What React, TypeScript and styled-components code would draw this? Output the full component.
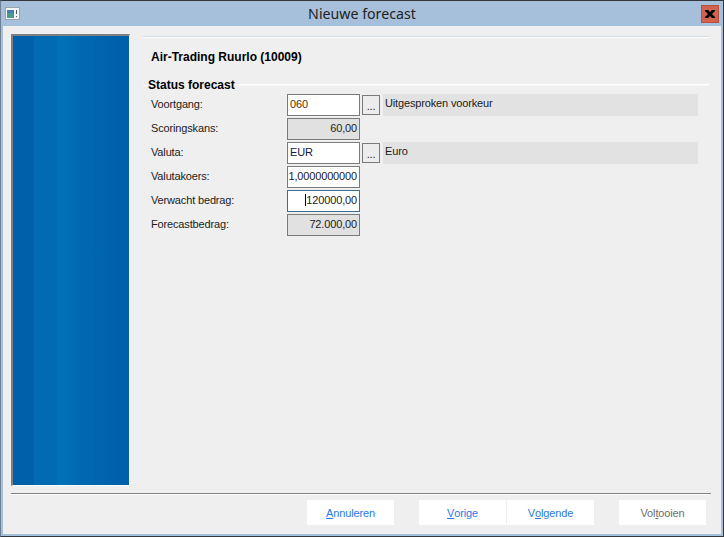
import { createGlobalStyle } from "styled-components";
import styled from "styled-components";

const GlobalStyle = createGlobalStyle`
  html, body {
    margin: 0;
    padding: 0;
    background: #a6c0dc;
  }
  * {
    box-sizing: border-box;
  }
`;

interface FormRow {
  label: string;
  value: string;
  align?: "left" | "right";
  readOnly?: boolean;
  focused?: boolean;
  tone?: string;
  lookup?: string;
}

const rows: FormRow[] = [
  { label: "Voortgang:", value: "060", tone: "#5a3000", lookup: "Uitgesproken voorkeur" },
  { label: "Scoringskans:", value: "60,00", align: "right", readOnly: true },
  { label: "Valuta:", value: "EUR", tone: "#10203a", lookup: "Euro" },
  { label: "Valutakoers:", value: "1,0000000000", align: "right" },
  { label: "Verwacht bedrag:", value: "120000,00", align: "right", focused: true },
  { label: "Forecastbedrag:", value: "72.000,00", align: "right", readOnly: true },
];

export default function App() {
  return (
    <>
      <GlobalStyle />
      <Window>
        <TitleBar>
          <SystemIcon viewBox="0 0 15 13" width="15" height="13">
            <rect x="0.5" y="0.5" width="14" height="12" fill="#f4f4f4" stroke="#9aa3ab" />
            <rect x="2" y="3" width="7" height="8" fill="#4c9a8e" />
            <rect x="2" y="3" width="7" height="3" fill="#4a7fa8" />
            <rect x="11" y="3" width="1" height="4" fill="#4a5866" />
            <rect x="11" y="9" width="1" height="1" fill="#4a5866" />
          </SystemIcon>
          <Title>Nieuwe forecast</Title>
          <CloseButton>
            <svg viewBox="0 0 10 8" width="10" height="8">
              <path d="M0 0h3l2 2 2-2h3v1L7 4l3 3v1H7L5 6 3 8H0V7l3-3-3-3z" fill="#000" />
            </svg>
          </CloseButton>
        </TitleBar>
        <Client>
          <Main>
            <SidePanel />
            <Content>
              <TopRule />
              <Customer>Air-Trading Ruurlo (10009)</Customer>
              <GroupHeader>
                <GroupTick />
                <GroupTitle>Status forecast</GroupTitle>
                <GroupLine />
              </GroupHeader>
              <Form>
                {rows.map((row) => (
                  <Row key={row.label}>
                    <Label>{row.label}</Label>
                    <Field $align={row.align} $readOnly={row.readOnly} $focused={row.focused} $tone={row.tone}>
                      {row.focused ? <Caret /> : null}
                      {row.value}
                    </Field>
                    {row.lookup ? (
                      <>
                        <LookupButton>...</LookupButton>
                        <LookupText>{row.lookup}</LookupText>
                      </>
                    ) : null}
                  </Row>
                ))}
              </Form>
            </Content>
          </Main>
          <BottomRule />
          <Footer>
            <WizardButton>
              <u>A</u>nnuleren
            </WizardButton>
            <StepGroup>
              <WizardButton>
                <u>V</u>orige
              </WizardButton>
              <WizardButton>
                V<u>o</u>lgende
              </WizardButton>
            </StepGroup>
            <WizardButton $disabled>
              Vol<u>t</u>ooien
            </WizardButton>
          </Footer>
        </Client>
      </Window>
    </>
  );
}

const Window = styled.div`
  width: 724px;
  height: 537px;
  display: flex;
  flex-direction: column;
  padding: 0 2px 2px;
  background: #a6c0dc;
  border: 1px solid #3c4044;
  border-color: #34373b #34373b #34373b #6d7f92;
  font-family: "Liberation Sans", Arial, sans-serif;
  font-size: 11px;
  letter-spacing: -0.15px;
  color: #111;
`;

const TitleBar = styled.div`
  position: relative;
  flex: none;
  height: 25px;
  display: flex;
  align-items: center;
  justify-content: center;
`;

const SystemIcon = styled.svg`
  position: absolute;
  left: 2px;
  top: 6px;
`;

const Title = styled.div`
  font-family: "Noto Sans", "Open Sans", sans-serif;
  font-size: 14.2px;
  letter-spacing: 0;
  color: #222;
`;

const CloseButton = styled.div`
  position: absolute;
  right: 2px;
  top: 4px;
  width: 18px;
  height: 18px;
  display: flex;
  align-items: center;
  justify-content: center;
  background: #cf6350;
  border: 1px solid #b9503f;
`;

const Client = styled.div`
  flex: 1;
  display: flex;
  flex-direction: column;
  padding: 8px 10px 8px 8px;
  background: #efefef;
`;

const Main = styled.div`
  flex: none;
  height: 452px;
  display: flex;
`;

const SidePanel = styled.div`
  flex: none;
  width: 119px;
  border-style: solid;
  border-width: 2px 1px 1px 2px;
  border-color: #7f7f7f #fafafa #fafafa #7f7f7f;
  background: linear-gradient(
    90deg,
    #0060a9 0 21px,
    #006ab2 21px 44px,
    #0071b6 44px 52px,
    #0068b2 68px,
    #005ea9 100%
  );
`;

const Content = styled.div`
  flex: 1;
  min-width: 0;
  padding: 2px 2px 0 13px;
  display: flex;
  flex-direction: column;
`;

const TopRule = styled.div`
  height: 2px;
  border-top: 1px solid #d3dde6;
  background: #fff;
`;

const Customer = styled.div`
  margin: 11px 0 0 8px;
  height: 16px;
  line-height: 16px;
  font-size: 12px;
  letter-spacing: 0;
  font-weight: bold;
  color: #000;
`;

const GroupHeader = styled.div`
  margin-top: 12px;
  height: 16px;
  display: flex;
  align-items: center;
`;

const GroupTick = styled.div`
  width: 4px;
  height: 1px;
  background: #fff;
`;

const GroupTitle = styled.div`
  padding: 0 1px;
  font-size: 12px;
  letter-spacing: 0;
  font-weight: bold;
  color: #000;
`;

const GroupLine = styled.div`
  flex: 1;
  height: 2px;
  border-top: 1px solid #fff;
  border-bottom: 1px solid #f7f7f7;
`;

const Form = styled.div`
  margin-top: 1px;
  display: flex;
  flex-direction: column;
  gap: 2px;
`;

const Row = styled.div`
  height: 22px;
  display: flex;
  align-items: center;
`;

const Label = styled.div`
  flex: none;
  width: 144px;
  padding: 0 0 2px 8px;
  color: #1c1c1c;
`;

const Field = styled.div<{ $align?: string; $readOnly?: boolean; $focused?: boolean; $tone?: string }>`
  flex: none;
  width: 73px;
  height: 22px;
  display: flex;
  align-items: center;
  justify-content: ${(p) => (p.$align === "right" ? "flex-end" : "flex-start")};
  padding: 0 2px 2px 2px;
  white-space: nowrap;
  background: ${(p) => (p.$readOnly ? "#e1e1e1" : "#fff")};
  border: 1px solid ${(p) => (p.$focused ? "#3d6d92" : "#7a7a7a")};
  color: ${(p) => p.$tone ?? "#222"};
`;

const Caret = styled.span`
  width: 1px;
  height: 12px;
  background: #000;
`;

const LookupButton = styled.div`
  flex: none;
  width: 18px;
  height: 20px;
  margin-left: 2px;
  display: flex;
  align-items: flex-end;
  justify-content: center;
  padding-bottom: 3px;
  line-height: 10px;
  background: #ececec;
  border: 1px solid #7a7a7a;
  color: #222;
`;

const LookupText = styled.div`
  flex: none;
  width: 315px;
  height: 22px;
  margin-left: 3px;
  padding: 3px 0 0 2px;
  background: #e2e2e2;
  color: #1c1c1c;
`;

const BottomRule = styled.div`
  flex: none;
  height: 2px;
  margin-top: 7px;
  width: 700px;
  border-top: 1px solid #808080;
  background: #fff;
`;

const Footer = styled.div`
  flex: none;
  margin-top: 5px;
  padding-left: 296px;
  display: flex;
  gap: 25px;
`;

const StepGroup = styled.div`
  display: flex;
  gap: 1px;
`;

const WizardButton = styled.div<{ $disabled?: boolean }>`
  width: 87px;
  height: 25px;
  display: flex;
  align-items: center;
  justify-content: center;
  white-space: pre;
  background: #fff;
  color: ${(p) => (p.$disabled ? "#6d6d6d" : "#2a78e4")};
`;
